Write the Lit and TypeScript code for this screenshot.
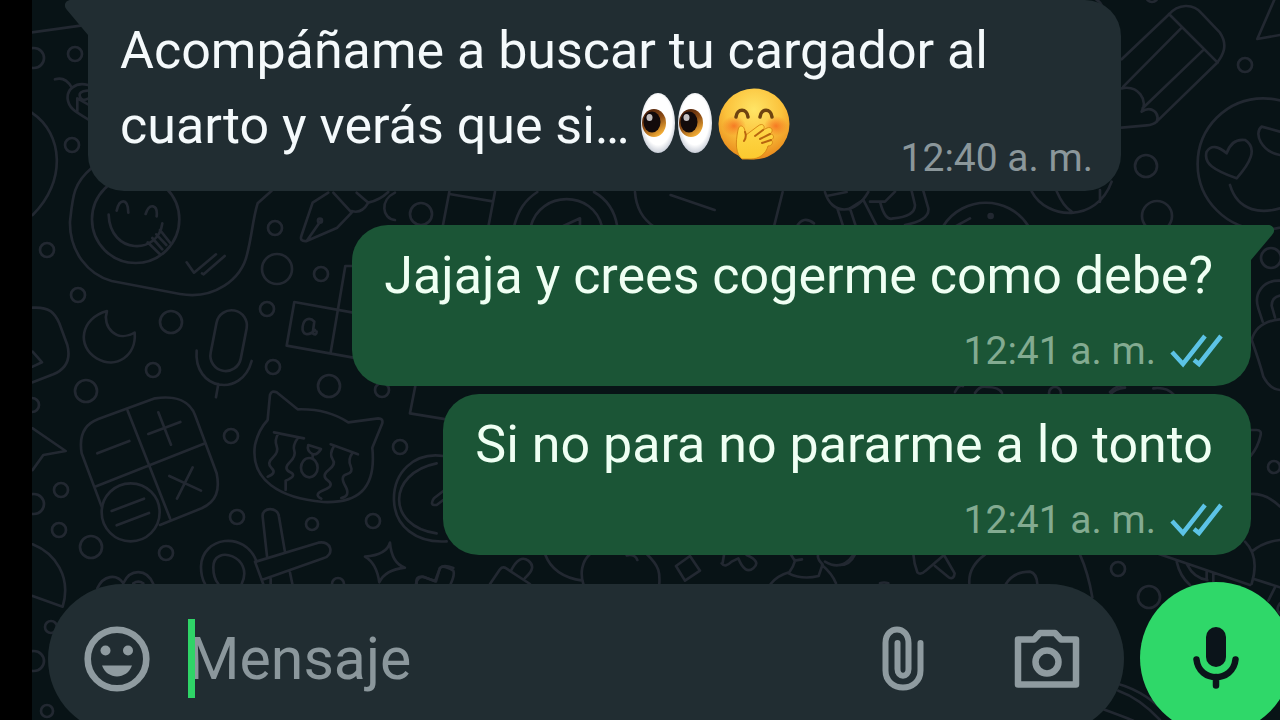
import { LitElement, html, css, svg, nothing } from "lit";
import { customElement, property } from "lit/decorators.js";

interface Message {
  text: string;
  time: string;
  outgoing: boolean;
  first: boolean;
  emojis?: boolean;
}

const MESSAGES: Message[] = [
  { text: "Acompáñame a buscar tu cargador al cuarto y verás que si…", time: "12:40 a. m.", outgoing: false, first: true, emojis: true },
  { text: "Jajaja y crees cogerme como debe?", time: "12:41 a. m.", outgoing: true, first: true },
  { text: "Si no para no pararme a lo tonto", time: "12:41 a. m.", outgoing: true, first: false },
];

/* Small rings scattered over the wallpaper: x, y, radius. */
const RINGS: number[][] = [
  [75, 54, 7], [34, 58, 10], [72, 145, 7], [47, 250, 7], [78, 295, 7], [86, 391, 11],
  [171, 322, 11], [153, 370, 7], [275, 228, 7], [277, 269, 15], [321, 274, 7],
  [267, 309, 7], [273, 367, 7], [329, 386, 11], [382, 390, 7], [421, 214, 11],
  [231, 436, 7], [400, 447, 7], [237, 517, 7], [312, 524, 6], [373, 521, 7],
  [61, 490, 7], [34, 504, 10], [59, 530, 7], [91, 547, 11], [166, 553, 7],
  [338, 584, 6], [32, 405, 7], [51, 627, 6], [34, 661, 10], [47, 711, 6],
  [1245, 65, 7], [1146, 166, 11], [1157, 216, 15], [1118, 569, 7], [1149, 597, 11],
  [1271, 258, 10], [1274, 467, 6], [1055, 393, 6], [1152, -4, 6],
];

const wallpaper = svg`
  ${RINGS.map(([x, y, r]) => svg`<circle cx=${x} cy=${y} r=${r} />`)}
  <g transform="scale(.3333)" stroke-width="8">
    <path d="M95 97L242 77M165 238Q195 228 215 262M264 255C225 245 200 270 203 297S225 335 264 358M262 272q-28 2-22 18t24 6M232 335V295l32 18" />
    <path d="M95 338C190 400 200 545 98 645" />
  </g>
  <g transform="translate(0 180) scale(.3333)" stroke-width="8">
    <path d="M275-36C220 10 218 50 210 125C208 215 265 285 335 303L540 342C640 360 725 300 742 220C755 170 760 110 773 70L815 32" />
    <circle cx="407" cy="118" r="131" />
    <path d="M350 92q6-28 20-28t15 34M437 102q8-26 22-23t11 30M326 104C330 225 475 225 487 130M443 187l37 36M480 150l30 38M457 174l30 34M469 163l30 32" />
    <path d="M560 247l22 31l66-55M606 280l5 3l63-55" />
    <path d="M98 383C150 380 165 400 178 430L202 495C215 545 190 570 160 583L98 607M98 515l28 32l-28 13" />
    <path d="M321 393C240 415 230 500 290 535S410 525 404 458C350 490 305 440 321 393Z" />
    <rect x="640" y="390" width="92" height="184" rx="46" transform="rotate(11 686 482)" />
    <path d="M590 512C580 630 725 655 755 543M655 612l-7 40" />
    <path d="M1060 398L883 366L860 497L1060 533M1060 258h-24L992 518" />
    <path d="M945 450C925 470 905 465 908 440S930 410 943 425L938 460Q950 468 950 455" />
    <path d="M905 165L938 68L985 38M920 183L1012 143L1055 98L1000 38M905 165q-8 20 15 18l42-60M1070 38L1105 68q-20 35-50 25M1105 68q35-8 60-32M1185 38C1140 60 1145 115 1185 120" />
    <circle cx="960" cy="122" r="6" />
  </g>
  <g transform="translate(0 380) scale(.3333)" stroke-width="8">
    <path d="M305 380L245 220C235 160 260 130 295 117L465 55C530 45 570 65 585 105L650 280C660 330 650 365 605 385L480 435M383 92L510 415M285 320L610 192M292 220l96-37M445 162l96-36M475 97l38 97M508 288l95 44M578 262l-47 94" />
    <circle cx="392" cy="397" r="87" />
    <path d="M335 393l97-37M350 436l97-37" />
    <path d="M803 120L810 45q5-15 20-8L893 88Q980 85 1045 127L1135 115q15 0 12 15L1117 203C1130 330 1070 370 970 366C840 355 750 300 765 195Q775 150 803 120Z" />
    <path d="M822 157l90 18M992 193l82 30M835 160q-12 20-5 38t-12 35t-3 32t-12 25M895 172q-18 25-12 40t-14 35t2 30t-14 25v28M1002 198q-15 25-4 40t-12 32t-2 32t-12 28t-8 26M1058 218q-15 20-6 40t-12 25t-4 35t-12 36M925 195l38 12q-10 18-24 16q-20-10-14-28ZM938 222v15" />
    <ellipse cx="928" cy="263" rx="25" ry="29" />
    <path d="M1246 18L1230 100L1340 118M1330 228C1240 215 1180 280 1182 360S1250 490 1340 484M1310 250C1160 280 1160 440 1310 460M1334 330l-32 25q-15 22 8 20l24-18" />
    <path d="M98 145L197 213L130 225L98 270M98 493C165 520 215 590 188 680L98 648" />
    <path d="M770 545C735 450 605 470 603 560Q603 590 615 612M725 612C765 530 640 490 640 562Q640 595 655 612M801 528L788 410C785 380 835 380 837 410L855 516M768 545L955 488C995 480 1005 525 970 535L785 600M765 545l25 68M812 596v18M870 578l8 38" />
    <path d="M1170 488Q1175 550 1215 563Q1155 570 1138 607Q1130 550 1095 530Q1160 525 1170 488Z" />
    <path d="M292 625C310 585 350 580 370 610C390 565 440 565 460 612M400 610q15-10 30 0M1248 612q5-25 25-20l35 12l12-40q10-12 40 0" />
  </g>
  <g transform="translate(400 180) scale(.3333)" stroke-width="8">
    <path d="M128 140L148 35M148 42l130 22M265 140L285 35M342 140C355 90 375 60 412 36M582 36C625 60 645 95 652 140M392 140C420 30 580 30 606 140M485 140l55-25v25M705 36Q710 105 762 140M812 45l132 45M1148 36L1122 140M1190 140q20-35 52-10M1275 36c20 70 90 70 130 0M1280 48l60-12M1312 85l18 55M1350 85l18 55" />
  </g>
  <g transform="translate(400 540) scale(.3333)" stroke-width="8">
    <path d="M50 132q-5-25 20-22l35 14l15-40q8-10 40 8q5 12-8 40M270 132L300 88q8-10 20-2l70 46M333 92q25-50 52-30t-10 52M435 42Q460 110 548 122M570 42C545 65 540 100 550 132M740 42C780 80 780 100 778 132M680 46q25-5 32 14M828 78l42-30l30 44l-45 30ZM965 70q10 15 30-5l20-10q20 50 45 30t-20-40M968 68l5-28M1172 42l12 20l22-4M1186 60q-5 20-20 40q40 20 90 8l12-35q-20-20-12-32M1112 132q20-25 55-35M1266 75q30 25 42 55M1275 65q50 30 85-20" />
  </g>
  <g transform="translate(850 0) scale(.3333)" stroke-width="8">
    <path d="M740 0q20 10 20 40M815 178L955 45C985 10 1030 10 1055 40L1110 98C1135 135 1120 165 1100 190L920 365Q910 375 890 376L815 383M957 42L1103 188M993 85L820 260M1058 152L878 325M815 265C865 255 895 300 875 335C905 315 930 340 920 365M1275-5L1222 117L1290 105" />
    <circle cx="1240" cy="492" r="197" />
    <path d="M1160 535C1090 510 1060 490 1070 455Q1090 425 1130 460Q1145 415 1185 420C1225 445 1200 490 1160 535ZM1140 555C1165 640 1240 640 1290 625M1290 465C1235 455 1210 400 1235 380T1290 395" />
    <path d="M545 574C590 660 740 670 785 545M620 574Q640 620 665 635M750 570v35M280 678C340 585 475 585 535 678M315 680l45-25M0 625L40 600L80 678M60 605h45l30-30M90 605q15 60 40 50q65-5 65-40l-10-42M165 675q75-15 70-50l-15-52" />
    <circle cx="422" cy="648" r="6" fill="currentColor" />
  </g>
  <g transform="translate(1100 230) scale(.3333)" stroke-width="8">
    <path d="M540 152C490 150 460 190 475 235L488 275M525 262l-10-35q0-25 25-30M540 268Q470 275 455 330Q480 400 490 440Q510 478 540 480M450 600h20q15 0 12 15Q475 650 452 678M452 792Q500 790 540 830M435 935Q480 980 455 1062M455 965Q490 935 540 930M170 970L450 1065M230 995Q240 1040 270 1065M262 1005q20 40 60 45M320 1025v25M340 1030v25M462 1047l78 25M525 1072l-20 40M540 1120q-15 20 0 30M30 495q15-20 45-22M160 475q40-5 62 20" />
  </g>
  <g transform="translate(840 540) scale(.3333)" stroke-width="8">
    <path d="M220 42q2 30 12 55q10 10 25-5L312 45M312 45l32 55q-2 20-18 12L285 78M388 130Q385 80 435 44M720 44Q745 100 757 172M498 132Q520 95 570 95Q590 100 592 132M120 130q12-5 25 0M835 432Q920 455 1000 540M835 452Q900 475 960 540M790 508Q850 530 880 542M0 75q30 0 45-32" />
  </g>
  <path d="M955 392q4-8 8-6M975 393q5-8 12-6q12 0 15 6M1110 392q5-6 15-7" />
`;

@customElement("chat-emojis")
export class ChatEmojis extends LitElement {
  static styles = css`
    :host { display: inline-flex; gap: 6px; margin-left: 10px; vertical-align: -17px; }
    svg { display: block; height: 72px; }
  `;
  render() {
    return html`
      <svg width="72" height="72" viewBox="0 0 72 72" role="img" aria-label="👀">
        <defs>
          <radialGradient id="white" cx=".5" cy=".45" r=".55">
            <stop offset=".75" stop-color="#fff" /><stop offset="1" stop-color="#c9ced8" />
          </radialGradient>
          <linearGradient id="iris" x1="0" y1="0" x2=".6" y2="1">
            <stop offset="0" stop-color="#3b1408" /><stop offset=".55" stop-color="#8a4a14" /><stop offset="1" stop-color="#f3ad35" />
          </linearGradient>
        </defs>
        ${[0, 37].map((dx) => svg`
          <g transform="translate(${dx} 0)">
            <ellipse cx="18" cy="35" rx="17" ry="30" fill="url(#white)" />
            <ellipse cx="14" cy="35" rx="12" ry="14" fill="url(#iris)" />
            <ellipse cx="12" cy="34" rx="8.500" ry="10.500" fill="#120a0b" />
            <ellipse cx="9.500" cy="29.500" rx="3" ry="3.500" fill="#c4bfc0" />
          </g>`)}
      </svg>
      <svg width="72" height="72" viewBox="0 0 72 72" role="img" aria-label="🤭">
        <defs>
          <radialGradient id="face" cx=".5" cy=".3" r=".72">
            <stop offset="0" stop-color="#ffe566" /><stop offset=".55" stop-color="#fbc23c" /><stop offset="1" stop-color="#e8861a" />
          </radialGradient>
          <radialGradient id="blush"><stop offset="0" stop-color="#f4681d" stop-opacity=".8" /><stop offset="1" stop-color="#f4681d" stop-opacity="0" /></radialGradient>
          <linearGradient id="hand" x1="0" y1="0" x2="0" y2="1">
            <stop offset="0" stop-color="#ffd84a" /><stop offset="1" stop-color="#fbc92f" />
          </linearGradient>
        </defs>
        <circle cx="36" cy="36" r="35.500" fill="url(#face)" />
        <ellipse cx="16" cy="38" rx="12" ry="10" fill="url(#blush)" />
        <ellipse cx="58" cy="38" rx="12" ry="10" fill="url(#blush)" />
        <g fill="none" stroke="#6e4310" stroke-width="3.500" stroke-linecap="round">
          <path d="M18 29C19 20 29 20 30 29M42 29C43 20 53 20 54 29" />
        </g>
        <path d="M20 42C21 36 26 37 27 43L28 47L40 38C45 34 48 39 45 42L49 40C54 38 56 43 52 46C56 46 57 50 53 52C56 54 54 58 50 58C48 66 41 71 33 71H24C18 66 17 56 20 42Z" fill="url(#hand)" stroke="#d98a17" stroke-width="1" />
        <path d="M45 42L37 48M52 46L42 51M53 52L44 55M27 44q2 5-1 9" fill="none" stroke="#b8650f" stroke-width="2" stroke-linecap="round" />
      </svg>
    `;
  }
}

@customElement("chat-bubble")
export class ChatBubble extends LitElement {
  @property({ attribute: false }) message!: Message;

  static styles = css`
    :host { display: flex; }
    .bubble {
      position: relative;
      box-sizing: border-box;
      width: max-content;
      max-width: calc(100% - 130px);
      padding: 13px 28px 10px 32px;
      border-radius: 36px;
      background: #212d32;
      color: #f4f9fb;
      display: flex;
      flex-direction: column;
    }
    .out { margin-left: auto; background: #1b5536; color: #effff3; }
    .in { padding-bottom: 8px; }
    .in.first { border-top-left-radius: 0; }
    .out.first { border-top-right-radius: 0; }
    .text { margin: 0 10px 0 0; font-size: 52px; line-height: 75px; }
    .meta {
      display: flex;
      align-items: center;
      justify-content: flex-end;
      gap: 14px;
      margin-top: 13px;
      font-size: 39px;
      line-height: 50px;
      color: #8b979b;
    }
    .out .meta { color: #83ab91; }
    .in .meta { margin-top: -30px; }
    .tail { position: absolute; top: 0; width: 24px; height: 36px; }
    .out .tail { left: 100%; fill: #1b5536; }
    .in .tail { right: 100%; fill: #212d32; transform: scaleX(-1); }
    .ticks { width: 53px; height: 34px; }
  `;

  render() {
    const m = this.message;
    return html`
      <article class="bubble ${m.outgoing ? "out" : "in"} ${m.first ? "first" : ""}">
        ${m.first ? html`<svg class="tail" viewBox="0 0 24 36" aria-hidden="true"><path d="M-1 0H17C23 0 25 6 21 10L0 35H-1Z" /></svg>` : nothing}
        <p class="text">${m.text}${m.emojis ? html`<chat-emojis></chat-emojis>` : nothing}</p>
        <div class="meta">
          <time>${m.time}</time>
          ${m.outgoing
            ? html`<svg class="ticks" viewBox="0 0 53 34" role="img" aria-label="Leído" fill="none" stroke="#5cc3e6" stroke-width="4.500">
                <path d="M2 18L13 30L35 2M24 26L29 30L51 2" />
              </svg>`
            : nothing}
        </div>
      </article>
    `;
  }
}

@customElement("app-root")
export class AppRoot extends LitElement {
  static styles = css`
    :host {
      display: flex;
      box-sizing: border-box;
      height: 100vh;
      padding-left: 32px;
      overflow: hidden;
      background: #000;
      font-family: Roboto, "Liberation Sans", sans-serif;
    }
    .chat {
      position: relative;
      flex: 1;
      min-width: 0;
      display: flex;
      flex-direction: column;
      overflow: hidden;
      background: #081316;
    }
    .wallpaper {
      position: absolute;
      inset: 0;
      width: 100%;
      height: 100%;
      fill: none;
      stroke: #222831;
      color: #222831;
      stroke-width: 2.7;
      stroke-linecap: round;
      stroke-linejoin: round;
    }
    .messages {
      position: relative;
      flex: 1;
      min-height: 0;
      display: flex;
      flex-direction: column;
      justify-content: flex-end;
      gap: 8px;
      padding: 0 29px 27px 56px;
    }
    .reply { margin-top: 26px; }
    .composer {
      position: relative;
      display: flex;
      align-items: flex-end;
      gap: 16px;
      margin: 0 -12px -14px 16px;
    }
    .field {
      flex: 1;
      min-width: 0;
      height: 150px;
      box-sizing: border-box;
      display: flex;
      align-items: center;
      padding: 0 40px 0 32px;
      border-radius: 75px;
      background: #212d32;
    }
    button {
      display: grid;
      place-items: center;
      flex: none;
      padding: 0;
      border: 0;
      background: none;
      color: #8f9ba0;
    }
    .tool { width: 74px; height: 74px; }
    .clip { margin-right: 70px; }
    .tool svg { width: 66px; height: 66px; }
    .entry { position: relative; flex: 1; min-width: 0; margin-left: 34px; display: flex; }
    input {
      flex: 1;
      min-width: 0;
      padding: 0;
      border: 0;
      outline: 0;
      background: none;
      color: #f4f9fb;
      font: 59px/80px Roboto, "Liberation Sans", sans-serif;
      height: 80px;
    }
    input::placeholder { color: #8b979c; opacity: 1; }
    .caret { position: absolute; left: 0; top: 0; width: 7px; height: 79px; background: #2fd467; }
    .mic {
      width: 152px;
      height: 152px;
      border-radius: 50%;
      background: #2fd869;
      color: #0b141a;
    }
    .mic svg { width: 46px; height: 62px; }
  `;

  render() {
    return html`
      <main class="chat">
        <svg class="wallpaper" viewBox="32 0 1248 720" preserveAspectRatio="xMinYMax slice" aria-hidden="true">${wallpaper}</svg>
        <section class="messages" aria-label="Mensajes">
          ${MESSAGES.map((m, i) => html`<chat-bubble class=${i > 0 && m.first ? "reply" : ""} .message=${m}></chat-bubble>`)}
        </section>
        <form class="composer" @submit=${(e: Event) => e.preventDefault()}>
          <div class="field">
            <button class="tool" type="button" aria-label="Emojis">
              <svg viewBox="0 0 66 66">
                <circle cx="33" cy="33" r="29.300" fill="none" stroke="currentColor" stroke-width="6.600" />
                <g fill="currentColor"><circle cx="21.500" cy="24.500" r="5" /><circle cx="44" cy="24.500" r="5" /><path d="M18 39.500H48C43 54 23 54 18 39.500Z" /></g>
              </svg>
            </button>
            <div class="entry">
              <span class="caret"></span>
              <input type="text" placeholder="Mensaje" aria-label="Mensaje" />
            </div>
            <button class="tool clip" type="button" aria-label="Adjuntar">
              <svg viewBox="0 0 66 66" fill="none" stroke="currentColor" stroke-width="6">
                <path stroke-linecap="round" d="M50.500 17V44.500C50.500 67 15.500 67 15.500 44.500V17C15.500 -1 38.500 -1 38.500 17V43C38.500 52 27.500 52 27.500 43V17" />
              </svg>
            </button>
            <button class="tool" type="button" aria-label="Cámara">
              <svg viewBox="0 0 66 66" fill="none" stroke="currentColor" stroke-width="6.500" stroke-linejoin="round">
                <path d="M4 13.500H20L26 7H41L47 13.500H62V58.500H4Z" />
                <circle cx="33" cy="36" r="11.500" />
              </svg>
            </button>
          </div>
          <button class="mic" type="button" aria-label="Grabar mensaje de voz">
            <svg viewBox="0 0 46 62">
              <rect x="13" y="0" width="20" height="40" rx="10" fill="currentColor" />
              <path d="M3.500 32.500C6 56 40 56 42.500 32.500M23 50V58.500" fill="none" stroke="currentColor" stroke-width="6.500" stroke-linecap="round" />
            </svg>
          </button>
        </form>
      </main>
    `;
  }
}
